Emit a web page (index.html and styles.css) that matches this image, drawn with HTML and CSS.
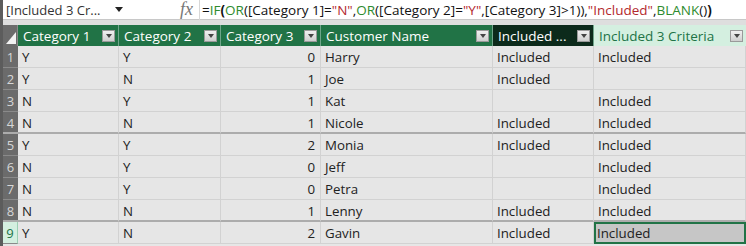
FILE: index.html
```html
<!DOCTYPE html>
<html>
<head>
<meta charset="utf-8">
<link rel="stylesheet" href="styles.css">
</head>
<body>
<div class="app">
  <div class="strip"></div>
  <div class="main">
    <div class="fbar">
      <div class="namebox"><span class="nb-text">[Included 3 Cr...</span><span class="nb-arrow"></span></div>
      <div class="fx">fx</div>
      <div class="formula">=<span class="fn">IF</span><b>(</b><span class="fn">OR</span>([Category 1]=<span class="st">"N"</span>,<span class="fn">OR</span>([Category 2]=<span class="st">"Y"</span>,[Category 3]&gt;1)),<span class="st">"Included"</span>,<span class="fn">BLANK</span>()<b>)</b></div>
    </div>
    <div class="band"></div>
    <div class="grid">
      <div class="hd corner"><svg width="10" height="12" viewBox="0 0 10 12"><polygon points="10,0 10,12 0,12" fill="#f2f2f2"/></svg></div>
      <div class="hd">Category 1<span class="dd"></span></div>
      <div class="hd">Category 2<span class="dd"></span></div>
      <div class="hd">Category 3<span class="dd"></span></div>
      <div class="hd">Customer Name<span class="dd"></span></div>
      <div class="hd dark">Included ...<span class="dd"></span></div>
      <div class="hd sel">Included 3 Criteria<span class="dd"></span></div>

      <div class="rn">1</div><div class="c">Y</div><div class="c">Y</div><div class="c num">0</div><div class="c">Harry</div><div class="c">Included</div><div class="c">Included</div>
      <div class="rn">2</div><div class="c">Y</div><div class="c">N</div><div class="c num">1</div><div class="c">Joe</div><div class="c">Included</div><div class="c"></div>
      <div class="rn">3</div><div class="c">N</div><div class="c">Y</div><div class="c num">1</div><div class="c">Kat</div><div class="c"></div><div class="c">Included</div>
      <div class="rn sep">4</div><div class="c sep">N</div><div class="c sep">N</div><div class="c num sep">1</div><div class="c sep">Nicole</div><div class="c sep">Included</div><div class="c sep">Included</div>
      <div class="rn">5</div><div class="c">Y</div><div class="c">Y</div><div class="c num">2</div><div class="c">Monia</div><div class="c">Included</div><div class="c">Included</div>
      <div class="rn">6</div><div class="c">N</div><div class="c">Y</div><div class="c num">0</div><div class="c">Jeff</div><div class="c"></div><div class="c">Included</div>
      <div class="rn">7</div><div class="c">N</div><div class="c">Y</div><div class="c num">0</div><div class="c">Petra</div><div class="c"></div><div class="c">Included</div>
      <div class="rn sep">8</div><div class="c sep">N</div><div class="c sep">N</div><div class="c num sep">1</div><div class="c sep">Lenny</div><div class="c sep">Included</div><div class="c sep">Included</div>
      <div class="rn rsel">9</div><div class="c">Y</div><div class="c">N</div><div class="c num">2</div><div class="c">Gavin</div><div class="c">Included</div><div class="c active">Included</div>
    </div>
  </div>
</div>
</body>
</html>
```

FILE: styles.css
```css
* { box-sizing: border-box; }
html, body { margin: 0; padding: 0; }
body {
  width: 746px;
  height: 246px;
  overflow: hidden;
  background: #e6e6e6;
  font-family: "Open Sans", "Noto Sans", sans-serif;
  color: #222;
}
.app { display: flex; height: 246px; }
.strip { width: 3px; background: #5c5c5c; flex: none; }
.main { flex: 1; display: flex; flex-direction: column; }

.fbar {
  height: 20px;
  background: #fff;
  display: flex;
  align-items: center;
  border-bottom: 1px solid #c8c8c8;
}
.namebox {
  width: 177px;
  display: flex;
  align-items: center;
  padding-left: 3px;
  font-size: 13px;
  color: #333;
  white-space: nowrap;
}
.nb-text { width: 106px; overflow: hidden; }
.nb-arrow {
  width: 0; height: 0;
  border-left: 4px solid transparent;
  border-right: 4px solid transparent;
  border-top: 5px solid #222;
  margin-left: 3px;
}
.fx {
  width: 20px;
  font-family: "Liberation Serif", serif;
  font-style: italic;
  font-size: 18px;
  color: #777;
  line-height: 19px;
  border-right: 1px solid #d8d8d8;
  height: 20px;
}
.formula {
  padding-left: 2px;
  padding-top: 1px;
  font-size: 13.5px;
  white-space: nowrap;
  color: #111;
}
.formula b { font-weight: 700; }
.fn { color: #2e8b2e; }
.st { color: #b3282d; }

.band { height: 5px; background: #dedede; }

.grid {
  display: grid;
  grid-template-columns: 15px 101px 102px 100px 172px 101px 152px;
  grid-template-rows: 21px repeat(9, 22px);
  font-size: 13px;
}
.hd {
  background: #217346;
  color: #fff;
  display: flex;
  align-items: center;
  justify-content: space-between;
  padding: 0 3px 0 5px;
  border-right: 1px solid #6fa58a;
  white-space: nowrap;
  font-size: 13.5px;
}
.hd.corner {
  background: #6b6b6b;
  padding: 0 1px 2px 0;
  align-items: flex-end;
  justify-content: flex-end;
  border-right: 1px solid #8a8a8a;
}
.hd.dark { background: #0c2a1b; }
.hd.sel { background: #d4efe0; color: #217346; border-right: none; }
.dd {
  width: 13px;
  height: 12px;
  flex: none;
  background: linear-gradient(#f0f0f0, #cfcfcf);
  border: 1px solid #9a9a9a;
  position: relative;
}
.dd::after {
  content: "";
  position: absolute;
  left: 3px;
  top: 3px;
  border-left: 3px solid transparent;
  border-right: 3px solid transparent;
  border-top: 4px solid #444;
}
.rn {
  background: #6b6b6b;
  color: #d6d6d6;
  text-align: center;
  font-size: 13px;
  line-height: 21px;
  padding-top: 1px;
  border-bottom: 1px solid #8a8a8a;
}
.rn.rsel { background: #d4efe0; color: #217346; border-right: 1px solid #9ccfb3; }
.c {
  background: #e6e6e6;
  border-right: 1px solid #d2d2d2;
  border-bottom: 1px solid #d2d2d2;
  padding: 1px 4px 0;
  line-height: 20px;
  font-size: 13.3px;
  white-space: nowrap;
  overflow: hidden;
}
.c.num { text-align: right; padding-right: 5px; }
.sep { border-bottom: 2px solid #acacac; }
.c.active {
  background: #c6c6c6;
  border: 2px solid #217346;
  padding: 0 1px;
  line-height: 18px;
}
```
